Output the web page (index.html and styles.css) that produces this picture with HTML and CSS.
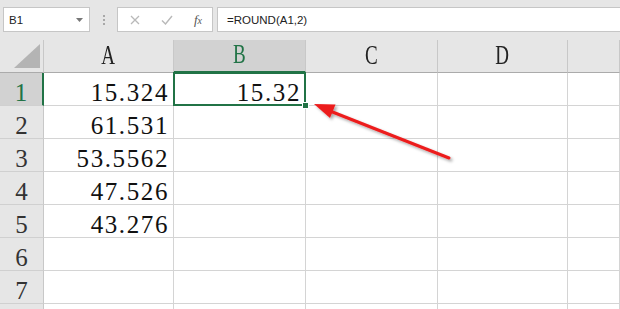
FILE: index.html
```html
<!DOCTYPE html>
<html lang="zh">
<head>
    <meta charset="UTF-8">
    <title>ROUND</title>
    <link rel="stylesheet" href="styles.css">
</head>
<body>
    <div class="toolbar">
        <div class="namebox">
            <span>B1</span>
            <svg class="caret" width="7" height="4" viewBox="0 0 7 4"><path d="M0 0h7L3.5 4z" fill="#777"/></svg>
        </div>
        <div class="grip"><i></i><i></i><i></i></div>
        <div class="fxbox">
            <svg width="10" height="10" viewBox="0 0 10 10"><path d="M1 1l8 8M9 1l-8 8" stroke="#b9b9b9" stroke-width="1.3"/></svg>
            <svg width="12" height="10" viewBox="0 0 12 10"><path d="M1 5.5l3.5 3.5L11 1" stroke="#b9b9b9" stroke-width="1.4" fill="none"/></svg>
            <span class="fx">f<small>x</small></span>
        </div>
        <div class="formula">=ROUND(A1,2)</div>
    </div>

    <div class="sheet">
        <div class="corner"><span class="tri"></span></div>
        <div class="colhead"><span>A</span></div>
        <div class="colhead active"><span>B</span></div>
        <div class="colhead"><span>C</span></div>
        <div class="colhead"><span>D</span></div>
        <div class="colhead"></div>

        <div class="rowhead active">1</div>
        <div class="cell num">15.324</div>
        <div class="cell num sel">15.32</div>
        <div class="cell"></div><div class="cell"></div><div class="cell"></div>

        <div class="rowhead">2</div>
        <div class="cell num">61.531</div>
        <div class="cell"></div><div class="cell"></div><div class="cell"></div><div class="cell"></div>

        <div class="rowhead">3</div>
        <div class="cell num">53.5562</div>
        <div class="cell"></div><div class="cell"></div><div class="cell"></div><div class="cell"></div>

        <div class="rowhead">4</div>
        <div class="cell num">47.526</div>
        <div class="cell"></div><div class="cell"></div><div class="cell"></div><div class="cell"></div>

        <div class="rowhead">5</div>
        <div class="cell num">43.276</div>
        <div class="cell"></div><div class="cell"></div><div class="cell"></div><div class="cell"></div>

        <div class="rowhead">6</div>
        <div class="cell"></div><div class="cell"></div><div class="cell"></div><div class="cell"></div><div class="cell"></div>

        <div class="rowhead">7</div>
        <div class="cell"></div><div class="cell"></div><div class="cell"></div><div class="cell"></div><div class="cell"></div>

        <div class="rowhead"></div>
        <div class="cell"></div><div class="cell"></div><div class="cell"></div><div class="cell"></div><div class="cell"></div>
    </div>

    <!-- red arrow pointing at B1 -->
    <svg class="arrow" width="620" height="309" viewBox="0 0 620 309">
        <defs>
            <filter id="shadow" x="-20%" y="-20%" width="140%" height="140%">
                <feDropShadow dx="2" dy="2" stdDeviation="1.5" flood-color="#000" flood-opacity="0.35"/>
            </filter>
        </defs>
        <g filter="url(#shadow)">
            <line x1="449" y1="158" x2="330" y2="111" stroke="#ec1c1c" stroke-width="3" stroke-linecap="round"/>
            <polygon points="314,104 335.5,104.5 330,118" fill="#ec1c1c"/>
        </g>
    </svg>
</body>
</html>
```

FILE: styles.css
```css
body {
    margin: 0;
    width: 620px;
    height: 309px;
    overflow: hidden;
    background-color: #fff;
    font-family: 'Liberation Serif', serif;
    position: relative;
}

/* formula bar */
.toolbar {
    display: flex;
    align-items: center;
    height: 40px;
    box-sizing: border-box;
    padding: 7px 0 8px 3px;
    background-color: #e6e6e6;
    font-family: 'Liberation Sans', Arial, sans-serif;
    font-size: 11.5px;
    color: #222;
}

.namebox,
.fxbox,
.formula {
    height: 25px;
    box-sizing: border-box;
    border: 1px solid #c6c6c6;
    background-color: #fff;
    display: flex;
    align-items: center;
}

.namebox {
    width: 87px;
    padding: 0 6px 0 5px;
    justify-content: space-between;
}

.grip {
    width: 27px;
    display: flex;
    flex-direction: column;
    align-items: center;
    gap: 2px;
}

.grip i {
    width: 2px;
    height: 2px;
    background-color: #a8a8a8;
}

.fxbox {
    width: 96px;
    padding: 0 10px 0 12px;
    justify-content: space-between;
}

.fx {
    font-family: 'Liberation Serif', serif;
    font-style: italic;
    font-size: 13px;
    color: #555;
}

.fx small {
    font-size: 10px;
}

.formula {
    flex: 1;
    margin-left: 4px;
    padding-left: 9px;
    border-right: none;
}

/* grid */
.sheet {
    display: grid;
    grid-template-columns: 44px 130px 132px 132px 130px 1fr;
    grid-auto-rows: 33px;
}

.sheet > div {
    box-sizing: border-box;
}

.corner {
    background-color: #e6e6e6;
    border-right: 1px solid #c8c8c8;
    border-bottom: 1px solid #ababab;
    display: flex;
    align-items: flex-end;
    justify-content: flex-end;
    padding: 0 3px 4px 0;
}

.tri {
    width: 0;
    height: 0;
    border-left: 26px solid transparent;
    border-bottom: 24px solid #b4b4b4;
}

.colhead {
    background-color: #e6e6e6;
    border-right: 1px solid #c8c8c8;
    border-bottom: 1px solid #ababab;
    display: flex;
    align-items: flex-end;
    justify-content: center;
    font-size: 28px;
    line-height: 28px;
    color: #222;
}

.colhead span {
    display: inline-block;
    transform: scaleX(0.68);
    margin-bottom: 3px;
}

.colhead.active {
    background-color: #d2d2d2;
    border-bottom: 2px solid #217346;
    color: #217346;
}

.rowhead {
    background-color: #e6e6e6;
    border-right: 1px solid #c8c8c8;
    border-bottom: 1px solid #d0d0d0;
    display: flex;
    align-items: flex-end;
    justify-content: center;
    font-size: 25px;
    line-height: 25px;
    color: #333;
}

.rowhead.active {
    background-color: #d2d2d2;
    border-right: 2px solid #217346;
    color: #217346;
}

.cell {
    border-right: 1px solid #d4d4d4;
    border-bottom: 1px solid #d4d4d4;
}

.num {
    display: flex;
    align-items: flex-end;
    justify-content: flex-end;
    padding-right: 4px;
    font-size: 25px;
    line-height: 25px;
    letter-spacing: 1.6px;
    color: #111;
}

.sel {
    position: relative;
}

.sel::before {
    content: "";
    position: absolute;
    left: -1px;
    top: -1px;
    right: -1px;
    bottom: -1px;
    border: 2px solid #217346;
}

.sel::after {
    content: "";
    position: absolute;
    right: -4px;
    bottom: -4px;
    width: 5px;
    height: 5px;
    background-color: #217346;
    border: 1px solid #fff;
}

.arrow {
    position: absolute;
    left: 0;
    top: 0;
    pointer-events: none;
}
```
